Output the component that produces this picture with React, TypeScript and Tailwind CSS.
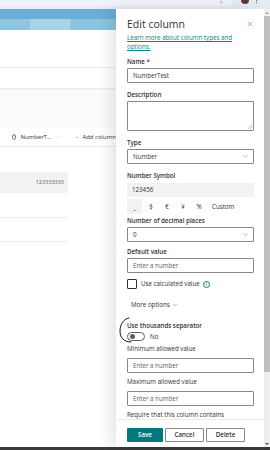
import { ChevronDown, X, Plus } from "lucide-react";
import type { ReactNode } from "react";

function Label({ children, className = "" }: { children: ReactNode; className?: string }) {
  return <div className={`text-[6.2px] leading-[10px] text-[#323130] ${className}`}>{children}</div>;
}

function TextBox({ value, placeholder, className = "" }: { value?: string; placeholder?: string; className?: string }) {
  return (
    <div
      className={`flex h-[15px] items-center rounded-[1px] border border-[#8a8886] px-[5px] text-[6.2px] ${className}`}
    >
      {value ? <span className="text-[#323130]">{value}</span> : <span className="text-[#605e5c]">{placeholder}</span>}
    </div>
  );
}

function Select({ value, className = "" }: { value: string; className?: string }) {
  return (
    <div
      className={`flex h-[15px] items-center justify-between rounded-[1px] border border-[#8a8886] pl-[5px] pr-[4px] text-[6.2px] text-[#323130] ${className}`}
    >
      <span>{value}</span>
      <ChevronDown size={7} strokeWidth={1.5} className="text-[#605e5c]" />
    </div>
  );
}

function TopBar() {
  return (
    <div className="relative flex h-[9px] items-start bg-[#e7ebf4]">
      <div className="h-[6px] w-[233px] rounded-br-[6px] bg-[#f1f3fa]" />
      <span className="ml-[-14px] text-[5px] leading-[5px] text-[#5f6368]">☆</span>
      <div className="ml-[18px] mt-[-4px] h-[8px] w-[8px] rounded-full bg-[#5a3a2e]" />
      <div className="ml-[7px] flex flex-col gap-[1px]">
        <div className="h-[1px] w-[1px] bg-[#5f6368]" />
        <div className="h-[1px] w-[1px] bg-[#5f6368]" />
      </div>
    </div>
  );
}

function Page() {
  return (
    <div className="flex min-w-0 flex-1 flex-col overflow-hidden bg-white">
      <div className="flex h-[21px] flex-col bg-[#7ab8da]">
        <div className="h-[10px] bg-[#6aaed6]" />
        <div className="flex h-[11px]">
          <div className="w-[30px] bg-[#8fc5e1]" />
          <div className="w-[40px] bg-[#aad3e8]" />
          <div className="flex-1 bg-[#8cc3e0]" />
        </div>
      </div>
      <div className="h-[38px] border-b border-[#edebe9]" />
      <div className="h-[22px] border-b-2 border-[#f0efee]" />
      <div className="h-[38px] bg-[#fbfbfb]" />
      <div className="flex h-[19px] items-center border-b border-[#edebe9] text-[6px] text-[#605e5c]">
        <div className="ml-[12px] flex h-[6px] w-[6px] items-center justify-center rounded-full border border-[#8a8886] text-[4px] leading-none">
          1
        </div>
        <span className="ml-[4px] whitespace-nowrap text-[#323130]">NumberT...</span>
        <ChevronDown size={6} strokeWidth={1.5} className="ml-[5px]" />
        <Plus size={7} strokeWidth={1.2} className="ml-[15px]" />
        <span className="ml-[3px] whitespace-nowrap text-[#323130]">Add column</span>
      </div>
      <div className="h-[25px]" />
      <div className="flex h-[21px] w-[68px] items-center justify-end bg-[#f3f2f1] pr-[4px] text-[5.5px] text-[#605e5c]">
        123333333
      </div>
      <div className="h-[25px] w-[68px] border-b border-[#edebe9]" />
      <div className="h-[24px] w-[68px] border-b border-[#edebe9]" />
    </div>
  );
}

function Panel() {
  return (
    <div className="relative z-10 flex w-[148px] flex-col bg-white shadow-[-6px_0_14px_rgba(0,0,0,0.10)]">
      <div className="flex-1 overflow-hidden pl-[11px] pr-[10px] pt-[9px]">
        <div className="flex h-[12px] items-center justify-between">
          <span className="text-[10.5px] leading-[12px] text-[#323130]">Edit column</span>
          <X size={8} strokeWidth={1.3} className="text-[#605e5c]" />
        </div>
        <div className="mt-[3px] text-[6.2px] leading-[9px] text-[#038387] underline">
          Learn more about column types and options.
        </div>

        <Label className="mt-[6px] font-semibold">
          Name <span className="text-[#a4262c]">*</span>
        </Label>
        <TextBox value="NumberTest" className="mt-[1px]" />

        <Label className="mt-[7px] font-semibold">Description</Label>
        <div className="relative mt-[1px] h-[30px] rounded-[1px] border border-[#8a8886]">
          <svg className="absolute bottom-[1px] right-[1px]" width="4" height="4" viewBox="0 0 4 4">
            <path d="M4 0 L0 4 M4 2 L2 4" stroke="#a19f9d" strokeWidth="0.6" />
          </svg>
        </div>

        <Label className="mt-[7px] font-semibold">Type</Label>
        <Select value="Number" className="mt-[1px]" />

        <Label className="mt-[7px] font-semibold">Number Symbol</Label>
        <div className="mt-[2px] flex h-[14px] items-center bg-[#f3f2f1] px-[5px] text-[6.2px] text-[#323130]">
          123456
        </div>
        <div className="mt-[2px] flex h-[15px] items-center text-[6.2px] text-[#323130]">
          <div className="flex h-[15px] w-[15px] items-end justify-center bg-[#f3f2f1] pb-[3px] leading-none">_</div>
          <div className="ml-[1px] w-[16px] text-center">$</div>
          <div className="w-[16px] text-center">€</div>
          <div className="w-[16px] text-center">¥</div>
          <div className="w-[16px] text-center">%</div>
          <div className="ml-[5px]">Custom</div>
        </div>

        <Label className="mt-[2px] font-semibold">Number of decimal places</Label>
        <Select value="0" className="mt-[1px]" />

        <Label className="mt-[5px] font-semibold">Default value</Label>
        <TextBox placeholder="Enter a number" className="mt-[1px]" />

        <div className="mt-[6px] flex h-[10px] items-center text-[6.2px] text-[#323130]">
          <div className="h-[10px] w-[10px] rounded-[1px] border border-[#323130]" />
          <span className="ml-[4px]">Use calculated value</span>
          <div className="ml-[3px] flex h-[7px] w-[7px] items-center justify-center rounded-full border border-[#038387] text-[4.5px] font-semibold leading-none text-[#038387]">
            i
          </div>
        </div>

        <div className="mt-[11px] flex h-[10px] items-center pl-[4px] text-[6.2px] text-[#323130]">
          <span>More options</span>
          <ChevronDown size={6} strokeWidth={2} className="ml-[2px] text-[#038387]" />
        </div>

        <Label className="mt-[11px] font-semibold">Use thousands separator</Label>
        <div className="mt-[1px] flex h-[9px] items-center text-[6.2px] text-[#323130]">
          <div className="flex h-[9px] w-[18px] items-center rounded-full border border-[#605e5c] px-[1.5px]">
            <div className="h-[5px] w-[5px] rounded-full bg-[#605e5c]" />
          </div>
          <span className="ml-[5px]">No</span>
        </div>

        <Label className="mt-[3px]">Minimum allowed value</Label>
        <TextBox placeholder="Enter a number" className="mt-[4px]" />

        <Label className="mt-[4px]">Maximum allowed value</Label>
        <TextBox placeholder="Enter a number" className="mt-[4px]" />

        <Label className="mt-[4px]">Require that this column contains</Label>
      </div>

      <div className="flex h-[28px] items-start gap-[2px] border-t border-[#edebe9] bg-white pl-[11px] pt-[8px] text-[6.2px]">
        <div className="flex h-[14px] w-[36px] items-center justify-center rounded-[1px] bg-[#03787c] font-semibold text-white">
          Save
        </div>
        <div className="flex h-[14px] w-[39px] items-center justify-center rounded-[1px] border border-[#8a8886] font-semibold text-[#323130]">
          Cancel
        </div>
        <div className="flex h-[14px] w-[39px] items-center justify-center rounded-[1px] border border-[#8a8886] font-semibold text-[#323130]">
          Delete
        </div>
      </div>
    </div>
  );
}

function Scrollbar() {
  return (
    <div className="flex w-[6px] flex-col bg-[#f1f1f1]">
      <div className="flex h-[7px] items-center justify-center">
        <div className="h-0 w-0 border-x-[2px] border-b-[2px] border-x-transparent border-b-[#a3a3a3]" />
      </div>
      <div className="h-[356px] bg-[#c1c1c1]" />
      <div className="flex-1" />
      <div className="flex h-[7px] items-center justify-center">
        <div className="h-0 w-0 border-x-[2px] border-t-[2px] border-x-transparent border-t-[#505050]" />
      </div>
    </div>
  );
}

export default function App() {
  return (
    <div className="relative flex h-[450px] w-[270px] flex-col overflow-hidden bg-white font-['Open_Sans',sans-serif]">
      <TopBar />
      <div className="flex min-h-0 flex-1">
        <Page />
        <Panel />
        <Scrollbar />
      </div>
      <div className="h-[3px] bg-[#3a3a3a]" />
      <svg className="pointer-events-none absolute left-[116px] top-[316px] z-20" width="18" height="30" viewBox="0 0 18 30">
        <path d="M13 2 C7 3 4 9 4 15 C4 22 8 26 15 26" fill="none" stroke="#111" strokeWidth="1" strokeLinecap="round" />
      </svg>
    </div>
  );
}
